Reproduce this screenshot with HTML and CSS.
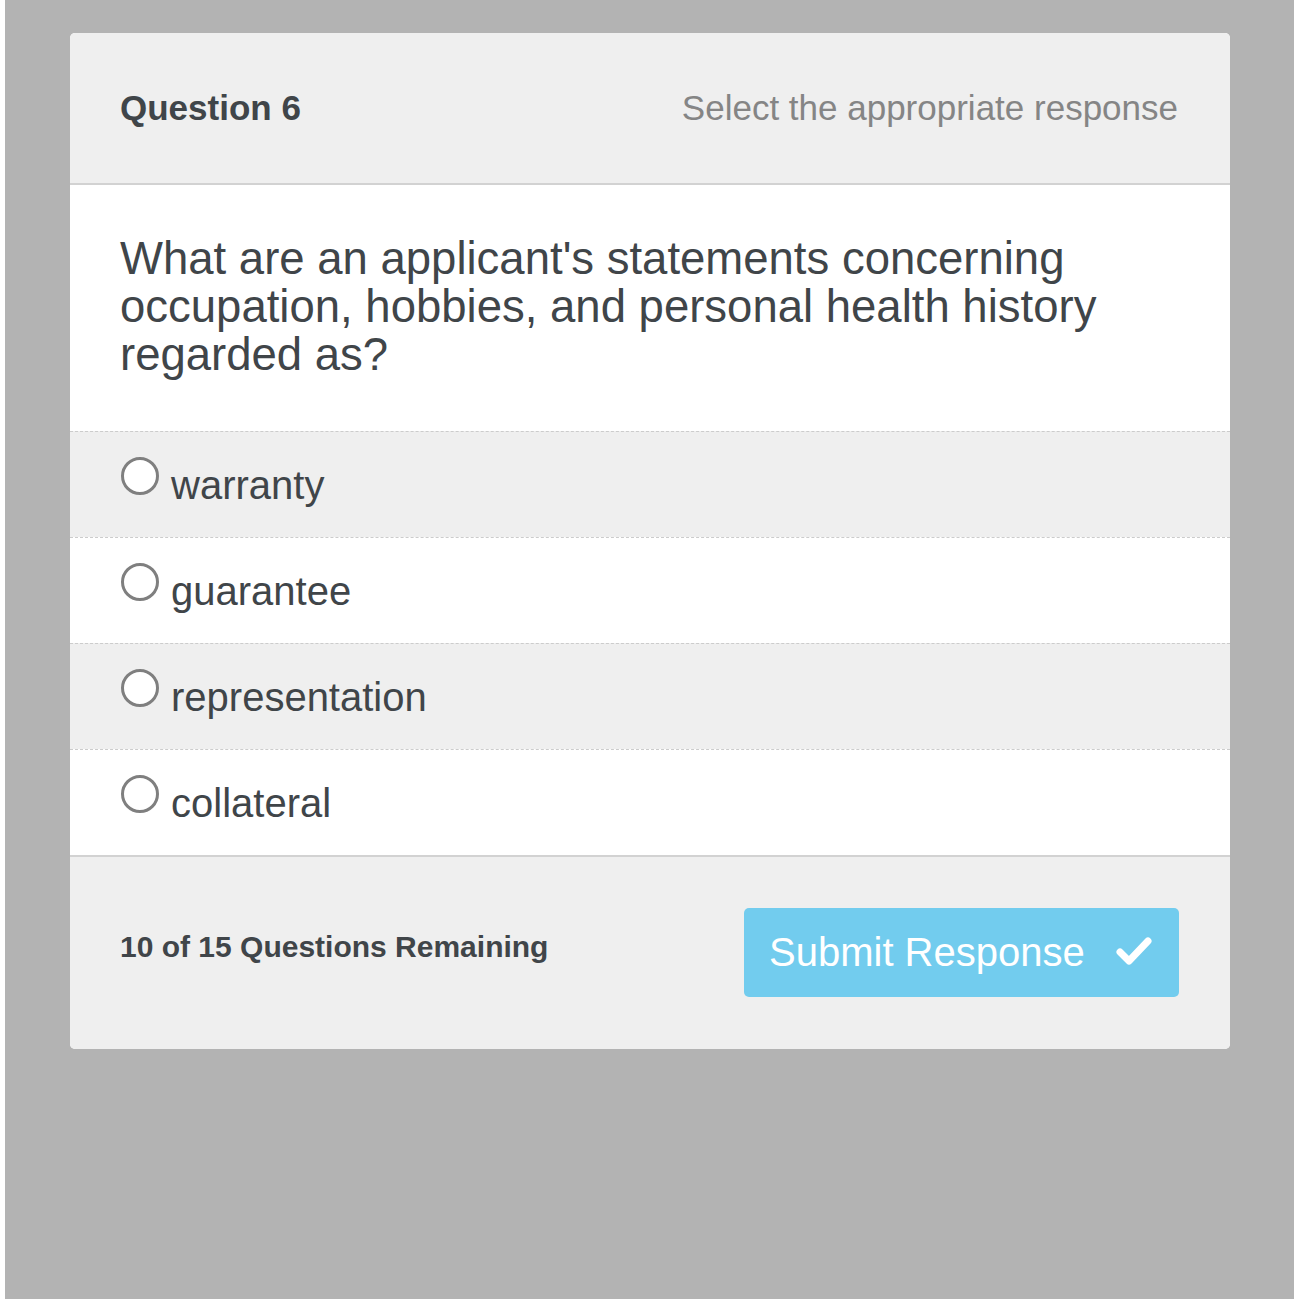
FILE: index.html
```html
<!DOCTYPE html>
<html lang="en">
<head>
    <meta charset="UTF-8">
    <meta name="viewport" content="width=device-width, initial-scale=1.0">
    <title>Question 6</title>
    <link rel="stylesheet" href="styles.css">
</head>
<body>

<div class="page">
    <div class="quiz-card">

        <header class="quiz-header">
            <h1>Question 6</h1>
            <span class="hint">Select the appropriate response</span>
        </header>

        <div class="question">
            What are an applicant's statements concerning occupation, hobbies, and personal health history regarded as?
        </div>

        <!-- Answer options -->
        <div class="options">
            <label class="option">
                <span class="radio"></span>
                <span class="option-text">warranty</span>
            </label>
            <label class="option">
                <span class="radio"></span>
                <span class="option-text">guarantee</span>
            </label>
            <label class="option">
                <span class="radio"></span>
                <span class="option-text">representation</span>
            </label>
            <label class="option">
                <span class="radio"></span>
                <span class="option-text">collateral</span>
            </label>
        </div>

        <footer class="quiz-footer">
            <span class="remaining">10 of 15 Questions Remaining</span>
            <button class="submit-btn">
                Submit Response
                <svg class="check" width="38" height="32" viewBox="0 0 38 32">
                    <path d="M5 17 L14 26 L33 6" fill="none" stroke="white" stroke-width="7" stroke-linecap="round" stroke-linejoin="round"/>
                </svg>
            </button>
        </footer>

    </div>
</div>

</body>
</html>
```

FILE: styles.css
```css
body {
    margin: 0;
    background-color: white;
    font-family: "Liberation Sans", Arial, sans-serif;
    color: #404549;
}

.page {
    background-color: #b3b3b3;
    margin: 0 5px 0 5px;
    min-height: 100vh;
    padding: 33px 64px 0 65px;
    box-sizing: border-box;
}

.quiz-card {
    background-color: white;
    border-radius: 5px;
    overflow: hidden;
}

.quiz-header {
    background-color: #efefef;
    height: 150px;
    padding: 0 52px 0 50px;
    display: flex;
    justify-content: space-between;
    align-items: center;
    border-bottom: 2px solid #d2d2d2;
}

.quiz-header h1 {
    margin: 0;
    font-size: 35px;
    font-weight: bold;
}

.hint {
    font-size: 35px;
    color: #858585;
}

.question {
    font-size: 45.5px;
    line-height: 48px;
    padding: 50px 50px 52px;
}

.option {
    display: flex;
    align-items: flex-start;
    padding: 25px 50px 28px 51px;
    border-top: 1px dashed #cccccc;
    font-size: 40px;
    line-height: 48px;
}

.option:nth-child(odd) {
    background-color: #efefef;
}

.option-text {
    padding-top: 4px;
}

.radio {
    width: 32px;
    height: 32px;
    border: 3px solid #7f7f7f;
    border-radius: 50%;
    background-color: white;
    margin-top: 0;
    margin-right: 12px;
    flex-shrink: 0;
}

.quiz-footer {
    background-color: #efefef;
    border-top: 2px solid #d2d2d2;
    padding: 51px 51px 52px 50px;
    display: flex;
    justify-content: space-between;
    align-items: center;
}

.remaining {
    font-size: 30px;
    font-weight: bold;
    margin-top: -12px;
}

.submit-btn {
    background-color: #72ccee;
    color: white;
    border: none;
    border-radius: 5px;
    width: 435px;
    height: 89px;
    padding: 0 26px 0 25px;
    font-family: "Liberation Sans", Arial, sans-serif;
    font-size: 40px;
    display: flex;
    align-items: center;
    justify-content: space-between;
    cursor: pointer;
}

.check {
    margin-top: -4px;
}
```
